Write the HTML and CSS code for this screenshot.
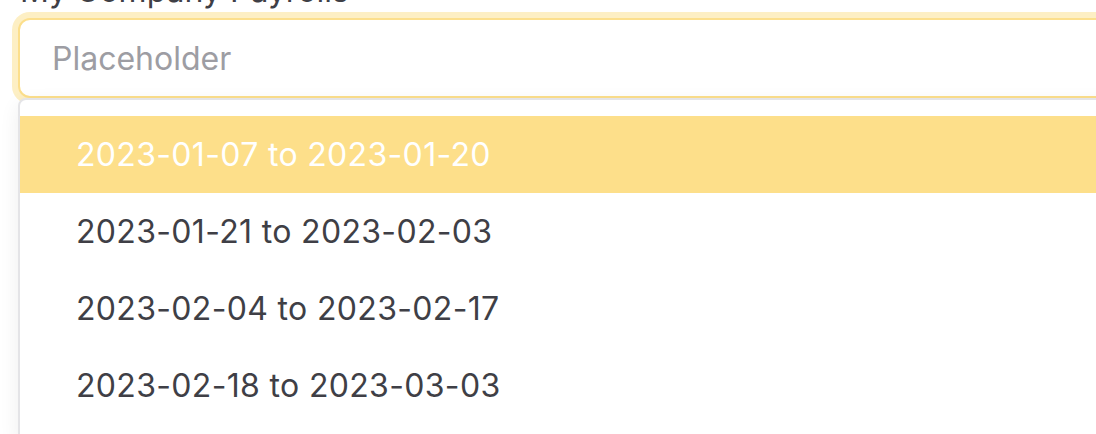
FILE: index.html
```html
<!DOCTYPE html>
<html lang="en">
<head>
<meta charset="utf-8">
<title>Payroll select</title>
<link rel="stylesheet" href="styles.css">
</head>
<body>
<div class="field">
  <label class="label">My Company Payrolls</label>
  <div class="combo">
    <div class="input"><span class="placeholder">Placeholder</span></div>
    <ul class="menu">
      <li class="option active">2023-01-07 to 2023-01-20</li>
      <li class="option">2023-01-21 to 2023-02-03</li>
      <li class="option">2023-02-04 to 2023-02-17</li>
      <li class="option">2023-02-18 to 2023-03-03</li>
    </ul>
  </div>
</div>
</body>
</html>
```

FILE: styles.css
```css
html {
  overflow: hidden;
}

body {
  margin: 0;
  padding: 0;
  min-height: 100vh;
  background: #ffffff;
  font-family: Inter, "Noto Sans", "Liberation Sans", sans-serif;
  color: #3f3f46;
}

.field {
  width: 1240px;
  margin-top: -29px;
  padding-left: 18px;
  display: flex;
  flex-direction: column;
}

.label {
  display: block;
  font-size: 32px;
  line-height: 40px;
  padding-left: 2px;
  margin-bottom: 7px;
  color: #3f3f46;
}

.combo {
  position: relative;
}

.input {
  box-sizing: border-box;
  height: 80px;
  border: 2px solid #fcdf8c;
  border-radius: 12px;
  box-shadow: 0 0 0 6px #fdefc4;
  background: #ffffff;
  display: flex;
  align-items: center;
  padding-left: 32px;
}

.placeholder {
  font-size: 32px;
  color: #9d9da3;
}

.menu {
  position: absolute;
  top: 100%;
  left: 0;
  right: 0;
  margin: 0;
  padding: 16px 0;
  list-style: none;
  background: #ffffff;
  border: 2px solid #e4e4e7;
  border-radius: 8px;
  box-shadow: 0 6px 20px rgba(0, 0, 0, 0.07);
  z-index: 2;
}

.option {
  height: 77px;
  line-height: 78px;
  padding-left: 56px;
  font-size: 32px;
  letter-spacing: 0.33px;
  color: #3f3f46;
}

.option.active {
  background: #fddf8a;
  color: #ffffff;
}
```
